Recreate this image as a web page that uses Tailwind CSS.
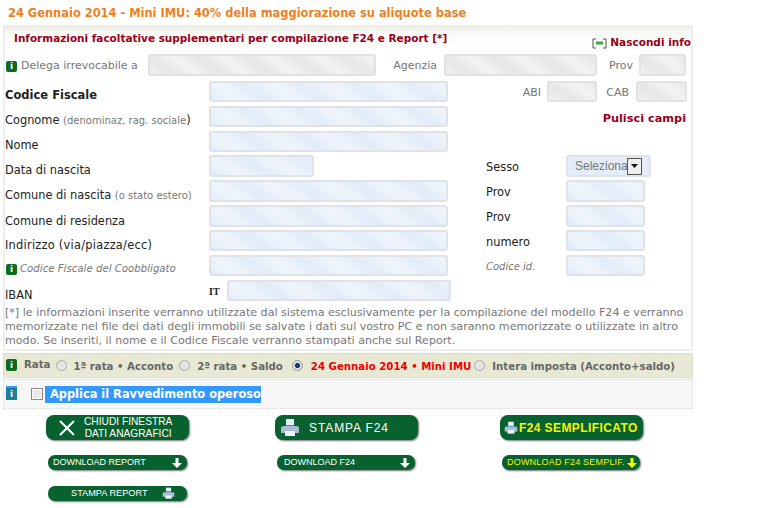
<!DOCTYPE html>
<html lang="it"><head><meta charset="utf-8"><script src="https://cdn.jsdelivr.net/npm/@tailwindcss/browser@4"></script></head>
<body class="bg-white font-['DejaVu_Sans',Verdana,sans-serif] text-[11.4px] text-[#333] w-[768px] h-[508px] overflow-hidden">
<h1 class="h-[25px] pl-[8px] pt-[6px] text-[11.43px] leading-[15px] font-bold text-[#f07f1b]">24 Gennaio 2014 - Mini IMU: 40% della maggiorazione su aliquote base</h1>
<main class="ml-[3px] w-[690px]">
<section class="h-[326px] border-2 border-[#eeeeec] border-t-0 border-r-[2px] bg-white bg-[linear-gradient(180deg,#eeeee8_0,#fbfbf9_10px,#ffffff_26px)]">
  <div class="h-[29px] flex justify-between pl-[9px]">
    <strong class="text-[#99001a] text-[10.47px] leading-[15px] pt-[6px]">Informazioni facoltative supplementari per compilazione F24 e Report [*]</strong>
    <span class="flex items-center gap-[3px] pt-[7px] pr-0 text-[#99001a] font-bold text-[10.5px]">
      <svg width="15" height="11" viewBox="0 0 15 11"><path d="M4 1H1v9h3M11 1h3v9h-3" fill="none" stroke="#555"/><rect x="4" y="3.500" width="7" height="3" fill="#2fae4a"/></svg>Nascondi info</span>
  </div>
  <div class="h-[27px] flex items-start">
    <span class="w-[143px] h-[21px] pt-[4px] pl-[1px] flex items-center gap-[4px] text-[11px] text-[#777]"><span class="w-[11px] h-[11px] rounded-[2px] bg-[#0d6b1f] text-white font-bold text-[9px] leading-[11px] text-center">i</span>Delega irrevocabile a</span>
    <span class="w-[228px] h-[22px] rounded-[3px] border-2 border-[#e2e2e2] bg-[repeating-linear-gradient(35deg,#f1f1f1_0,#e6e6e6_14px,#f4f4f4_28px)]"></span>
    <span class="w-[68px] h-[21px] pt-[4px] flex items-center justify-end pr-[7px] text-[11px] text-[#777]">Agenzia</span>
    <span class="w-[153px] h-[22px] rounded-[3px] border-2 border-[#e2e2e2] bg-[repeating-linear-gradient(35deg,#f1f1f1_0,#e6e6e6_14px,#f4f4f4_28px)]"></span>
    <span class="w-[42px] h-[21px] pt-[4px] flex items-center justify-end pr-[6px] text-[11px] text-[#777]">Prov</span>
    <span class="w-[47px] h-[22px] rounded-[3px] border-2 border-[#e2e2e2] bg-[repeating-linear-gradient(35deg,#f1f1f1_0,#e6e6e6_14px,#f4f4f4_28px)]"></span>
  </div>
  <div class="h-[25px] flex items-start">
    <span class="w-[204px] h-[22px] pt-[8px] flex items-center font-bold text-[11.5px] text-[#222]">Codice Fiscale</span>
    <span class="w-[239px] h-[21px] rounded-[3px] border-2 border-[#dfe3e8] bg-[repeating-linear-gradient(35deg,#e1ecf8_0,#f0f5fb_16px,#e1ecf8_32px)]"></span>
    <span class="w-[99px] h-[21px] pt-[4px] flex items-center justify-end pr-[6px] text-[11px] text-[#777]">ABI</span>
    <span class="w-[50px] h-[21px] rounded-[3px] border-2 border-[#e2e2e2] bg-[repeating-linear-gradient(35deg,#f1f1f1_0,#e6e6e6_14px,#f4f4f4_28px)]"></span>
    <span class="w-[39px] h-[21px] pt-[4px] flex items-center justify-end pr-[7px] text-[11px] text-[#777]">CAB</span>
    <span class="w-[51px] h-[21px] rounded-[3px] border-2 border-[#e2e2e2] bg-[repeating-linear-gradient(35deg,#f1f1f1_0,#e6e6e6_14px,#f4f4f4_28px)]"></span>
  </div>
  <div class="h-[25px] flex items-start">
    <span class="w-[204px] h-[22px] pt-[8px] flex items-center text-[#222]"><span>Cognome <span class="text-[10px] text-[#777]">(denominaz, rag. sociale</span>)</span></span>
    <span class="w-[239px] h-[21px] rounded-[3px] border-2 border-[#dfe3e8] bg-[repeating-linear-gradient(35deg,#e1ecf8_0,#f0f5fb_16px,#e1ecf8_32px)]"></span>
    <span class="ml-auto mr-[5px] h-[22px] pt-[4px] flex items-center font-bold text-[11.3px] text-[#99001a]">Pulisci campi</span>
  </div>
  <div class="h-[24px] flex items-start">
    <span class="w-[204px] h-[22px] pt-[8px] flex items-center text-[#222]">Nome</span>
    <span class="w-[239px] h-[21px] rounded-[3px] border-2 border-[#dfe3e8] bg-[repeating-linear-gradient(35deg,#e1ecf8_0,#f0f5fb_16px,#e1ecf8_32px)]"></span>
  </div>
  <div class="h-[25px] flex items-start">
    <span class="w-[204px] h-[24px] pt-[8px] flex items-center text-[#222]">Data di nascita</span>
    <span class="w-[105px] h-[22px] rounded-[3px] border-2 border-[#dfe3e8] bg-[repeating-linear-gradient(35deg,#e1ecf8_0,#f0f5fb_16px,#e1ecf8_32px)]"></span>
    <span class="ml-[172px] w-[80px] h-[24px] pt-[2px] flex items-center text-[#222]">Sesso</span>
    <span class="w-[85px] h-[22px] rounded-[3px] border-2 border-[#dfe3e8] bg-[#e4edf7] flex items-center pl-[7px] text-[#777] leading-none font-['Liberation_Sans',Arial,sans-serif]"><span class="text-[12px]">Seleziona</span><span class="-ml-[1px] w-[15px] h-[17px] border border-[#555] bg-[#eee] flex items-center justify-center"><svg width="7" height="4" viewBox="0 0 7 4"><path d="M0 0h7L3.500 4z" fill="#111"/></svg></span></span>
  </div>
  <div class="h-[25px] flex items-start">
    <span class="w-[204px] h-[22px] pt-[10px] flex items-center text-[#222]"><span>Comune di nascita <span class="text-[10px] text-[#777]">(o stato estero)</span></span></span>
    <span class="w-[239px] h-[22px] rounded-[3px] border-2 border-[#dfe3e8] bg-[repeating-linear-gradient(35deg,#e1ecf8_0,#f0f5fb_16px,#e1ecf8_32px)]"></span>
    <span class="ml-[38px] w-[80px] h-[22px] pt-[4px] flex items-center text-[#222]">Prov</span>
    <span class="w-[79px] h-[22px] rounded-[3px] border-2 border-[#dfe3e8] bg-[repeating-linear-gradient(35deg,#e1ecf8_0,#f0f5fb_16px,#e1ecf8_32px)]"></span>
  </div>
  <div class="h-[25px] flex items-start">
    <span class="w-[204px] h-[22px] pt-[11px] flex items-center text-[#222]">Comune di residenza</span>
    <span class="w-[239px] h-[22px] rounded-[3px] border-2 border-[#dfe3e8] bg-[repeating-linear-gradient(35deg,#e1ecf8_0,#f0f5fb_16px,#e1ecf8_32px)]"></span>
    <span class="ml-[38px] w-[80px] h-[22px] pt-[4px] flex items-center text-[#222]">Prov</span>
    <span class="w-[79px] h-[22px] rounded-[3px] border-2 border-[#dfe3e8] bg-[repeating-linear-gradient(35deg,#e1ecf8_0,#f0f5fb_16px,#e1ecf8_32px)]"></span>
  </div>
  <div class="h-[25px] flex items-start">
    <span class="w-[204px] h-[22px] pt-[9px] flex items-center tracking-[0.25px] text-[#222]">Indirizzo (via/piazza/ecc)</span>
    <span class="w-[239px] h-[21px] rounded-[3px] border-2 border-[#dfe3e8] bg-[repeating-linear-gradient(35deg,#e1ecf8_0,#f0f5fb_16px,#e1ecf8_32px)]"></span>
    <span class="ml-[38px] w-[80px] h-[22px] pt-[4px] flex items-center text-[#222]">numero</span>
    <span class="w-[79px] h-[21px] rounded-[3px] border-2 border-[#dfe3e8] bg-[repeating-linear-gradient(35deg,#e1ecf8_0,#f0f5fb_16px,#e1ecf8_32px)]"></span>
  </div>
  <div class="h-[25px] flex items-start">
    <span class="w-[204px] h-[22px] pt-[6px] pl-[1px] flex items-center gap-[3px] italic text-[10.2px] text-[#777]"><span class="not-italic w-[11px] h-[11px] rounded-[2px] bg-[#0d6b1f] text-white font-bold text-[9px] leading-[11px] text-center">i</span>Codice Fiscale del Coobbligato</span>
    <span class="w-[239px] h-[21px] rounded-[3px] border-2 border-[#dfe3e8] bg-[repeating-linear-gradient(35deg,#e1ecf8_0,#f0f5fb_16px,#e1ecf8_32px)]"></span>
    <span class="ml-[38px] w-[80px] h-[22px] flex items-center italic text-[10px] text-[#777]">Codice id.</span>
    <span class="w-[79px] h-[21px] rounded-[3px] border-2 border-[#dfe3e8] bg-[repeating-linear-gradient(35deg,#e1ecf8_0,#f0f5fb_16px,#e1ecf8_32px)]"></span>
  </div>
  <div class="h-[25px] flex items-start">
    <span class="w-[204px] h-[24px] pt-[7px] flex items-center text-[#222]">IBAN</span>
    <span class="w-[18px] h-[22px] flex items-center font-bold text-[10px] font-['Liberation_Serif',serif] text-[#222]">IT</span>
    <span class="w-[224px] h-[21px] rounded-[3px] border-2 border-[#dfe3e8] bg-[repeating-linear-gradient(35deg,#e1ecf8_0,#f0f5fb_16px,#e1ecf8_32px)]"></span>
  </div>
  <p class="pt-[1px] text-[11.1px] leading-[14.2px] text-[#777] whitespace-nowrap">[*] le informazioni inserite verranno utilizzate dal sistema esclusivamente per la compilazione del modello F24 e verranno<br>memorizzate nel file dei dati degli immobili se salvate i dati sul vostro PC e non saranno memorizzate o utilizzate in altro<br>modo. Se inseriti, il nome e il Codice Fiscale verranno stampati anche sul Report.</p>
</section>
<section class="mt-[2px] h-[25px] bg-[#e8e9d4] border border-dotted border-[#d6d6c4] flex items-center pl-[2px] pt-[2px] text-[10.2px] font-bold text-[#666] whitespace-nowrap">
  <span class="w-[11px] h-[12px] rounded-[2px] bg-[#0d6b1f] text-white text-[9px] leading-[12px] text-center mb-[3px]">i</span>
  <span class="ml-[7px] mb-[3px]">Rata</span>
  <span class="ml-[6px] w-[11px] h-[11px] rounded-full border border-[#aaa] bg-[#e4e4e4] mb-[3px]"></span>
  <span class="ml-[6px]">1ª rata • Acconto</span>
  <span class="ml-[6px] w-[11px] h-[11px] rounded-full border border-[#aaa] bg-[#e4e4e4] mb-[3px]"></span>
  <span class="ml-[7px]">2ª rata • Saldo</span>
  <span class="ml-[9px] w-[11px] h-[11px] rounded-full border border-[#999] bg-[radial-gradient(circle,#0d3f80_0,#0d3f80_35%,#dcdcdc_45%)] mb-[3px]"></span>
  <span class="ml-[8px] text-[#f00000]">24 Gennaio 2014 • Mini IMU</span>
  <span class="ml-[3px] w-[11px] h-[11px] rounded-full border border-[#aaa] bg-[#e4e4e4] mb-[3px]"></span>
  <span class="ml-[7px]">Intera imposta (Acconto+saldo)</span>
</section>
<section class="mt-[1px] h-[30px] bg-[#f7f7f7] border border-dotted border-[#ddd] flex items-center pl-[2px]">
  <span class="w-[11px] h-[14px] bg-[#1f7f9a] border-t-2 border-[#3399ff] text-white font-bold text-[9px] leading-[12px] text-center mb-[3px]">i</span>
  <span class="ml-[14px] w-[12px] h-[12px] border border-[#888] bg-[#e8e8e8] shadow-[inset_0_0_0_1px_#fff]"></span>
  <span class="ml-[2px] pl-[5px] h-[17px] w-[216px] bg-[#3399ff] text-white font-bold text-[11.4px] leading-[17px] whitespace-nowrap mt-[1px]">Applica il Ravvedimento operoso</span>
</section>
</main>
<nav class="ml-[46px] mt-[6px] w-[600px] grid grid-cols-[229px_225px_143px] font-['Liberation_Sans',Arial,sans-serif] text-white">
  <a class="w-[143px] h-[25px] rounded-[8px] bg-[#08622f] shadow-[1px_1px_2px_#777] flex items-center"><svg class="ml-[13px] mr-[9px]" width="16" height="16" viewBox="0 0 16 16"><path d="M1 1l14 14M15 1L1 15" stroke="#fff" stroke-width="2"/></svg><span class="text-[10.2px] leading-[12px] text-center whitespace-nowrap">CHIUDI FINESTRA<br>DATI ANAGRAFICI</span></a>
  <a class="w-[143px] h-[25px] rounded-[8px] bg-[#08622f] shadow-[1px_1px_2px_#777] flex items-center"><svg class="ml-[5px] mr-[9px]" width="20" height="20" viewBox="0 0 20 20"><path d="M6 1h8v6H6z" fill="#e8eef5"/><path d="M6 7h8v2H6z" fill="#2a8af0"/><path d="M1 10q0-2 3-2h12q3 0 3 2v5H1z" fill="#a9bdd3"/><path d="M5 13h10v5H5z" fill="#eef2f7"/></svg><span class="text-[12px] tracking-[0.9px]">STAMPA F24</span></a>
  <a class="w-[143px] h-[25px] rounded-[8px] bg-[#08622f] shadow-[1px_1px_2px_#777] flex items-center text-[#f6f600]"><svg class="ml-[4px] mr-[1px]" width="14" height="14" viewBox="0 0 20 20"><path d="M6 1h8v6H6z" fill="#e8eef5"/><path d="M6 7h8v2H6z" fill="#2a8af0"/><path d="M1 10q0-2 3-2h12q3 0 3 2v5H1z" fill="#a9bdd3"/><path d="M5 13h10v5H5z" fill="#eef2f7"/></svg><span class="text-[12px] tracking-[0.4px] font-bold">F24 SEMPLIFICATO</span></a>
  <a class="mt-[15px] ml-[2px] w-[139px] h-[15px] rounded-[7px] bg-[#08622f] shadow-[1px_1px_2px_#777] flex items-center justify-between pl-[5px] pr-[5px] text-[9px] whitespace-nowrap">DOWNLOAD REPORT<svg width="10" height="10" viewBox="0 0 10 10"><path d="M3.500 0h3v5H10L5 10 0 5h3.500z" fill="#fff"/></svg></a>
  <a class="mt-[15px] ml-[2px] w-[138px] h-[15px] rounded-[7px] bg-[#08622f] shadow-[1px_1px_2px_#777] flex items-center justify-between pl-[7px] pr-[5px] text-[9px] whitespace-nowrap">DOWNLOAD F24<svg width="10" height="10" viewBox="0 0 10 10"><path d="M3.500 0h3v5H10L5 10 0 5h3.500z" fill="#fff"/></svg></a>
  <a class="mt-[15px] ml-[2px] w-[138px] h-[15px] rounded-[7px] bg-[#08622f] shadow-[1px_1px_2px_#777] flex items-center justify-between pl-[5px] pr-[3px] text-[9px] tracking-[0.2px] text-[#f6f600] whitespace-nowrap">DOWNLOAD F24 SEMPLIF.<svg width="10" height="10" viewBox="0 0 10 10"><path d="M3.500 0h3v5H10L5 10 0 5h3.500z" fill="#f6f600"/></svg></a>
  <a class="mt-[16px] ml-[2px] w-[139px] h-[15px] rounded-[7px] bg-[#08622f] shadow-[1px_1px_2px_#777] flex items-center pl-[23px] text-[9.2px] whitespace-nowrap">STAMPA REPORT<svg class="ml-[14px]" width="13" height="13" viewBox="0 0 20 20"><path d="M6 1h8v6H6z" fill="#e8eef5"/><path d="M6 7h8v2H6z" fill="#2a8af0"/><path d="M1 10q0-2 3-2h12q3 0 3 2v5H1z" fill="#a9bdd3"/><path d="M5 13h10v5H5z" fill="#eef2f7"/></svg></a>
</nav>
</body></html>
